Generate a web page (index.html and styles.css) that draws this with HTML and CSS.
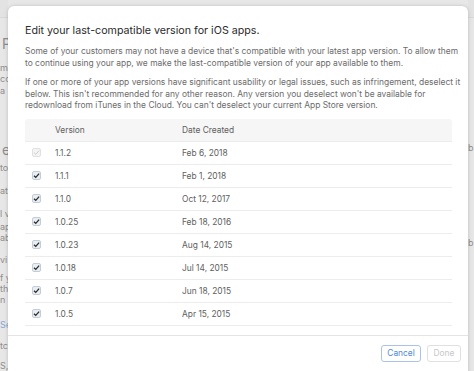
FILE: index.html
```html
<!DOCTYPE html>
<html>
<head>
<meta charset="utf-8">
<link rel="stylesheet" href="styles.css">
</head>
<body>
<div class="page">
  <div class="strip strip-left">
    <div class="topbar"></div>
    <div class="frag big f1">P</div>
    <div class="frag f2">m</div>
    <div class="frag f3">cc</div>
    <div class="frag f4">a</div>
    <div class="frag big f5">ec</div>
    <div class="frag f6">to</div>
    <div class="frag f7">at</div>
    <div class="frag f8">l v</div>
    <div class="frag f9">ap</div>
    <div class="frag f10">ab</div>
    <div class="frag f11">vi</div>
    <div class="frag f12">f y</div>
    <div class="frag f13">th</div>
    <div class="frag f14">n</div>
    <div class="frag link f15">Se</div>
    <div class="frag f16">tc</div>
    <div class="frag f17">S,</div>
  </div>
  <div class="strip strip-right">
    <div class="topbar"></div>
    <div class="frag r1">b</div>
    <div class="frag r2">b</div>
  </div>
</div>

<div class="modal">
  <div class="modal-body">
    <h1 class="title">Edit your last-compatible version for iOS apps.</h1>
    <p class="text">Some of your customers may not have a device that's compatible with your latest app version. To allow them to continue using your app, we make the last-compatible version of your app available to them.</p>
    <p class="text">If one or more of your app versions have significant usability or legal issues, such as infringement, deselect it below. This isn't recommended for any other reason. Any version you deselect won't be available for redownload from iTunes in the Cloud. You can't deselect your current App Store version.</p>
    <div class="table">
      <div class="row head">
        <div class="c-check"></div>
        <div class="c-ver">Version</div>
        <div class="c-date">Date Created</div>
      </div>
      <div class="row">
        <div class="c-check"><span class="cb disabled"><svg viewBox="0 0 10 10"><path d="M2.2 5.2 L4.2 7.1 L7.9 2.9"/></svg></span></div>
        <div class="c-ver">1.1.2</div>
        <div class="c-date">Feb 6, 2018</div>
      </div>
      <div class="row">
        <div class="c-check"><span class="cb"><svg viewBox="0 0 10 10"><path d="M2.2 5.2 L4.2 7.1 L7.9 2.9"/></svg></span></div>
        <div class="c-ver">1.1.1</div>
        <div class="c-date">Feb 1, 2018</div>
      </div>
      <div class="row">
        <div class="c-check"><span class="cb"><svg viewBox="0 0 10 10"><path d="M2.2 5.2 L4.2 7.1 L7.9 2.9"/></svg></span></div>
        <div class="c-ver">1.1.0</div>
        <div class="c-date">Oct 12, 2017</div>
      </div>
      <div class="row">
        <div class="c-check"><span class="cb"><svg viewBox="0 0 10 10"><path d="M2.2 5.2 L4.2 7.1 L7.9 2.9"/></svg></span></div>
        <div class="c-ver">1.0.25</div>
        <div class="c-date">Feb 18, 2016</div>
      </div>
      <div class="row">
        <div class="c-check"><span class="cb"><svg viewBox="0 0 10 10"><path d="M2.2 5.2 L4.2 7.1 L7.9 2.9"/></svg></span></div>
        <div class="c-ver">1.0.23</div>
        <div class="c-date">Aug 14, 2015</div>
      </div>
      <div class="row">
        <div class="c-check"><span class="cb"><svg viewBox="0 0 10 10"><path d="M2.2 5.2 L4.2 7.1 L7.9 2.9"/></svg></span></div>
        <div class="c-ver">1.0.18</div>
        <div class="c-date">Jul 14, 2015</div>
      </div>
      <div class="row">
        <div class="c-check"><span class="cb"><svg viewBox="0 0 10 10"><path d="M2.2 5.2 L4.2 7.1 L7.9 2.9"/></svg></span></div>
        <div class="c-ver">1.0.7</div>
        <div class="c-date">Jun 18, 2015</div>
      </div>
      <div class="row">
        <div class="c-check"><span class="cb"><svg viewBox="0 0 10 10"><path d="M2.2 5.2 L4.2 7.1 L7.9 2.9"/></svg></span></div>
        <div class="c-ver">1.0.5</div>
        <div class="c-date">Apr 15, 2015</div>
      </div>
    </div>
  </div>
  <div class="modal-footer">
    <button class="btn btn-cancel">Cancel</button>
    <button class="btn btn-done">Done</button>
  </div>
</div>
</body>
</html>
```
FILE: styles.css
```css
* { box-sizing: border-box; }
html, body {
  margin: 0;
  padding: 0;
  width: 474px;
  height: 371px;
  overflow: hidden;
  background: #e7e7e7;
  font-family: Inter, "Liberation Sans", sans-serif;
}
.page {
  display: flex;
  justify-content: space-between;
  width: 474px;
  height: 371px;
}
.strip {
  width: 8px;
  overflow: hidden;
  color: #8e8e8e;
  font-size: 9px;
  line-height: 11px;
  white-space: nowrap;
}
.strip-left { text-align: left; }
.strip-right { width: 6px; text-align: left; }
.topbar {
  height: 18px;
  border-bottom: 1px solid #d8d8d8;
  background: #e3e3e3;
}
.frag { height: 11px; }
.frag.big { font-size: 14px; height: 16px; line-height: 16px; padding-left: 2px; }
.frag.link { color: #88a6d6; }
.f1 { margin-top: 18px; }
.f2 { margin-top: 10px; }
.f3 { margin-top: 0; }
.f4 { margin-top: 1px; }
.f5 { margin-top: 46px; }
.f6 { margin-top: 4px; }
.f7 { margin-top: 12px; }
.f8 { margin-top: 12px; }
.f9 { margin-top: 2px; }
.f10 { margin-top: 0; }
.f11 { margin-top: 11px; }
.f12 { margin-top: 7px; }
.f13 { margin-top: 0; }
.f14 { margin-top: 0; }
.f15 { margin-top: 14px; }
.f16 { margin-top: 10px; }
.f17 { margin-top: 9px; }
.r1 { margin-top: 124px; }
.r2 { margin-top: 84px; }

.modal {
  position: absolute;
  top: 6px;
  left: 8px;
  width: 460px;
  height: 372px;
  background: #fff;
  border-radius: 6px;
  box-shadow: 0 0 3px rgba(0,0,0,0.12), 0 1px 6px rgba(0,0,0,0.08);
  display: flex;
  flex-direction: column;
}
.modal-body {
  padding: 17px 16px 0 17px;
  height: 330px;
  border-bottom: 1px solid #e4e4e4;
}
.title {
  margin: 0;
  font-size: 10.7px;
  font-weight: 400;
  line-height: 15px;
  color: #2b2b2b;
  letter-spacing: 0;
}
.text {
  margin: 8px 0 0;
  font-size: 8.45px;
  line-height: 11.5px;
  color: #6c6c6c;
  width: 436px;
}
.table {
  margin-top: 7px;
  font-size: 8.4px;
  color: #606060;
}
.row {
  display: flex;
  align-items: center;
  height: 23px;
  border-bottom: 1px solid #ececec;
}
.row.head {
  background: #f6f6f6;
  height: 23px;
  border-radius: 3px 3px 0 0;
}
.c-check {
  width: 30px;
  padding-left: 7px;
  display: flex;
  align-items: center;
}
.c-ver { width: 127px; }
.c-date { flex: 1; }
.cb {
  width: 9px;
  height: 9px;
  border: 1px solid #c3ccd7;
  border-radius: 2px;
  background: #e9eef4;
  display: block;
}
.cb svg {
  width: 9px;
  height: 9px;
  display: block;
  margin: -1px 0 0 -1px;
}
.cb path {
  fill: none;
  stroke: #2a2a2a;
  stroke-width: 1.4;
}
.cb.disabled {
  border-color: #e0e0e0;
  background: #f4f4f4;
}
.cb.disabled path { stroke: #c8c8c8; stroke-width: 1; }

.modal-footer {
  display: flex;
  justify-content: flex-end;
  gap: 6px;
  padding: 9px 7px 0 0;
}
.btn {
  height: 17px;
  border-radius: 3px;
  background: #fff;
  font-family: Inter, "Liberation Sans", sans-serif;
  font-size: 8.4px;
  padding: 0 4px;
  line-height: 15px;
}
.btn-cancel {
  width: 40px;
  border: 1px solid #a9c4e6;
  color: #4f8ad6;
}
.btn-done {
  width: 34px;
  border: 1px solid #e0e0e0;
  color: #c8c8c8;
}
```
